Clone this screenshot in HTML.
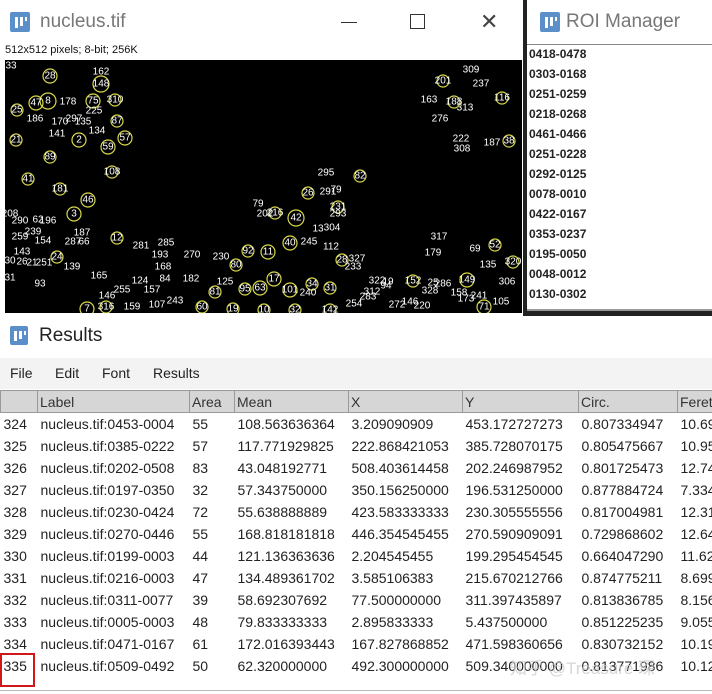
<!DOCTYPE html>
<html><head><meta charset="utf-8"><style>
*{margin:0;padding:0;box-sizing:border-box}
body{width:712px;height:694px;overflow:hidden;background:#fff;font-family:"Liberation Sans",sans-serif;position:relative}
.abs{position:absolute}
.logo{position:absolute;width:20px;height:20px;background:#5b8fc9;border-radius:2px}
.logo i{position:absolute;background:#fff}
.tt{font-size:19px;color:#777}
.roi div{height:20px;line-height:20px;font-size:12px;font-weight:bold;color:#222;padding-left:2px}
table{border-collapse:collapse;position:absolute;left:0;top:390px;font-size:14px;color:#222;table-layout:fixed;width:727px}
td{height:22px;padding-left:3px;white-space:nowrap;overflow:hidden}
tr.h td{background:#d6d6d6;border:1px solid #999;height:22px;color:#333;padding-left:2px}
</style></head><body>
<div class="abs" style="left:0;top:0;width:524px;height:316px;background:#fff"></div>
<div class="logo" style="left:10px;top:12px"><i style="left:5px;top:5px;width:3px;height:11px"></i><i style="left:10px;top:5px;width:3px;height:9px"></i><i style="left:15px;top:5px;width:2px;height:4px"></i></div>
<div class="abs tt" style="left:40px;top:11px">nucleus.tif</div>
<div class="abs" style="left:341px;top:22px;width:16px;height:1px;background:#333"></div>
<div class="abs" style="left:410px;top:14px;width:15px;height:15px;border:1px solid #333"></div>
<div class="abs" style="left:480px;top:12px;font-size:22px;color:#444;line-height:20px">✕</div>
<div class="abs" style="left:5px;top:44px;font-size:11px;color:#111">512x512 pixels; 8-bit; 256K</div>
<svg class="abs" style="left:5px;top:60px" width="517" height="253" viewBox="5 60 517 253">
<rect x="5" y="60" width="517" height="253" fill="#000"/>
<g fill="none" stroke="#d8d84a" stroke-width="1.2">
<circle cx="50" cy="76" r="7"/><circle cx="101" cy="84" r="8"/><circle cx="443" cy="81" r="6"/><circle cx="502" cy="98" r="6"/><circle cx="36" cy="103" r="7"/><circle cx="48" cy="101" r="8"/><circle cx="93" cy="101" r="7"/><circle cx="115" cy="100" r="6"/><circle cx="17" cy="110" r="6"/><circle cx="454" cy="102" r="6"/><circle cx="117" cy="121" r="6"/><circle cx="79" cy="140" r="7"/><circle cx="125" cy="138" r="7"/><circle cx="16" cy="140" r="6"/><circle cx="108" cy="147" r="7"/><circle cx="509" cy="141" r="6"/><circle cx="50" cy="157" r="6"/><circle cx="112" cy="172" r="6"/><circle cx="28" cy="179" r="6"/><circle cx="60" cy="189" r="6"/><circle cx="360" cy="176" r="6"/><circle cx="88" cy="200" r="7"/><circle cx="308" cy="193" r="6"/><circle cx="74" cy="214" r="7"/><circle cx="275" cy="213" r="6"/><circle cx="296" cy="218" r="8"/><circle cx="338" cy="207" r="6"/><circle cx="117" cy="238" r="6"/><circle cx="248" cy="251" r="6"/><circle cx="268" cy="252" r="7"/><circle cx="290" cy="243" r="7"/><circle cx="495" cy="245" r="6"/><circle cx="57" cy="257" r="6"/><circle cx="236" cy="265" r="6"/><circle cx="274" cy="279" r="7"/><circle cx="312" cy="284" r="6"/><circle cx="260" cy="288" r="7"/><circle cx="290" cy="290" r="7"/><circle cx="330" cy="288" r="6"/><circle cx="467" cy="280" r="7"/><circle cx="484" cy="307" r="7"/><circle cx="87" cy="309" r="7"/><circle cx="106" cy="307" r="6"/><circle cx="202" cy="307" r="6"/><circle cx="233" cy="309" r="6"/><circle cx="264" cy="310" r="6"/><circle cx="295" cy="310" r="6"/><circle cx="330" cy="310" r="6"/><circle cx="413" cy="281" r="6"/><circle cx="215" cy="292" r="6"/><circle cx="245" cy="289" r="6"/><circle cx="342" cy="260" r="6"/><circle cx="513" cy="262" r="6"/>
</g>
<g fill="#fff" font-size="10" font-family="Liberation Sans" text-anchor="middle" dominant-baseline="middle">
<text x="11" y="66">33</text><text x="50" y="76">28</text><text x="101" y="72">162</text><text x="101" y="84">148</text><text x="443" y="81">201</text><text x="471" y="70">309</text><text x="481" y="84">237</text><text x="502" y="98">116</text><text x="36" y="103">47</text><text x="48" y="101">8</text><text x="68" y="102">178</text><text x="93" y="101">75</text><text x="94" y="111">225</text><text x="115" y="100">310</text><text x="17" y="110">25</text><text x="429" y="100">163</text><text x="454" y="102">188</text><text x="465" y="108">313</text><text x="440" y="119">276</text><text x="35" y="119">186</text><text x="60" y="122">170</text><text x="74" y="119">297</text><text x="83" y="122">135</text><text x="117" y="121">87</text><text x="97" y="131">134</text><text x="57" y="134">141</text><text x="79" y="140">2</text><text x="125" y="138">57</text><text x="16" y="140">21</text><text x="108" y="147">59</text><text x="461" y="139">222</text><text x="462" y="149">308</text><text x="492" y="143">187</text><text x="509" y="141">38</text><text x="50" y="157">89</text><text x="112" y="172">108</text><text x="28" y="179">41</text><text x="60" y="189">181</text><text x="326" y="173">295</text><text x="360" y="176">82</text><text x="88" y="200">46</text><text x="308" y="193">26</text><text x="328" y="192">291</text><text x="336" y="190">79</text><text x="74" y="214">3</text><text x="258" y="204">79</text><text x="338" y="207">231</text><text x="10" y="214">208</text><text x="20" y="221">290</text><text x="38" y="220">62</text><text x="48" y="221">196</text><text x="265" y="214">202</text><text x="275" y="213">216</text><text x="296" y="218">42</text><text x="338" y="214">293</text><text x="33" y="232">239</text><text x="318" y="229">13</text><text x="332" y="228">304</text><text x="20" y="237">259</text><text x="43" y="241">154</text><text x="82" y="233">187</text><text x="73" y="242">287</text><text x="84" y="242">66</text><text x="117" y="238">12</text><text x="141" y="246">281</text><text x="166" y="243">285</text><text x="439" y="237">317</text><text x="248" y="251">92</text><text x="268" y="252">11</text><text x="290" y="243">40</text><text x="309" y="242">245</text><text x="331" y="247">112</text><text x="433" y="253">179</text><text x="475" y="249">69</text><text x="495" y="245">52</text><text x="22" y="252">143</text><text x="57" y="257">24</text><text x="160" y="255">193</text><text x="192" y="255">270</text><text x="221" y="257">230</text><text x="10" y="261">30</text><text x="22" y="262">26</text><text x="32" y="263">21</text><text x="44" y="263">251</text><text x="72" y="267">139</text><text x="163" y="267">168</text><text x="236" y="265">80</text><text x="342" y="260">28</text><text x="357" y="259">327</text><text x="353" y="267">233</text><text x="488" y="265">135</text><text x="513" y="262">320</text><text x="10" y="278">31</text><text x="99" y="276">165</text><text x="165" y="279">84</text><text x="191" y="279">182</text><text x="312" y="284">34</text><text x="377" y="281">322</text><text x="388" y="282">19</text><text x="413" y="281">152</text><text x="433" y="283">25</text><text x="443" y="284">286</text><text x="467" y="280">149</text><text x="507" y="282">306</text><text x="40" y="284">93</text><text x="140" y="281">124</text><text x="274" y="279">17</text><text x="225" y="282">125</text><text x="372" y="292">312</text><text x="386" y="286">94</text><text x="430" y="291">328</text><text x="122" y="290">255</text><text x="152" y="290">157</text><text x="215" y="292">81</text><text x="245" y="289">95</text><text x="260" y="288">63</text><text x="290" y="290">101</text><text x="308" y="293">240</text><text x="330" y="288">31</text><text x="459" y="293">158</text><text x="479" y="296">241</text><text x="107" y="296">146</text><text x="368" y="297">283</text><text x="466" y="299">173</text><text x="501" y="302">105</text><text x="87" y="309">7</text><text x="106" y="307">316</text><text x="132" y="307">159</text><text x="157" y="305">107</text><text x="175" y="301">243</text><text x="202" y="307">60</text><text x="354" y="304">254</text><text x="397" y="305">272</text><text x="410" y="302">146</text><text x="422" y="306">220</text><text x="484" y="307">71</text><text x="233" y="309">19</text><text x="264" y="310">10</text><text x="295" y="310">32</text><text x="330" y="310">142</text>
</g>
</svg>
<div class="abs" style="left:523px;top:0;width:4px;height:316px;background:#222"></div>
<div class="logo" style="left:540px;top:12px"><i style="left:5px;top:5px;width:3px;height:11px"></i><i style="left:10px;top:5px;width:3px;height:9px"></i><i style="left:15px;top:5px;width:2px;height:4px"></i></div>
<div class="abs tt" style="left:566px;top:11px">ROI Manager</div>
<div class="abs" style="left:527px;top:44px;width:185px;height:1px;background:#888"></div>
<div class="abs roi" style="left:527px;top:44px;width:185px">
<div>0418-0478</div><div>0303-0168</div><div>0251-0259</div><div>0218-0268</div><div>0461-0466</div><div>0251-0228</div><div>0292-0125</div><div>0078-0010</div><div>0422-0167</div><div>0353-0237</div><div>0195-0050</div><div>0048-0012</div><div>0130-0302</div>
</div>
<div class="abs" style="left:527px;top:309px;width:185px;height:2px;background:#999"></div>
<div class="abs" style="left:523px;top:311px;width:189px;height:5px;background:#222"></div>
<div class="abs" style="left:0;top:316px;width:712px;height:378px;background:#fff"></div>
<div class="logo" style="left:10px;top:326px;width:18px;height:19px"><i style="left:4px;top:5px;width:3px;height:10px"></i><i style="left:9px;top:5px;width:3px;height:8px"></i><i style="left:14px;top:5px;width:2px;height:4px"></i></div>
<div class="abs" style="left:39px;top:325px;font-size:19px;color:#222">Results</div>
<div class="abs" style="left:0;top:358px;width:712px;height:31px;background:#f3f3f3"></div>
<div class="abs" style="left:10px;top:365px;font-size:14px;color:#222">File</div>
<div class="abs" style="left:55px;top:365px;font-size:14px;color:#222">Edit</div>
<div class="abs" style="left:102px;top:365px;font-size:14px;color:#222">Font</div>
<div class="abs" style="left:153px;top:365px;font-size:14px;color:#222">Results</div>
<table>
<colgroup><col style="width:37px"><col style="width:152px"><col style="width:45px"><col style="width:114px"><col style="width:114px"><col style="width:116px"><col style="width:99px"><col style="width:50px"></colgroup>
<tr class="h"><td></td><td>Label</td><td>Area</td><td>Mean</td><td>X</td><td>Y</td><td>Circ.</td><td>Feret</td></tr>
<tr><td>324</td><td>nucleus.tif:0453-0004</td><td>55</td><td>108.563636364</td><td>3.209090909</td><td>453.172727273</td><td>0.807334947</td><td>10.69</td></tr>
<tr><td>325</td><td>nucleus.tif:0385-0222</td><td>57</td><td>117.771929825</td><td>222.868421053</td><td>385.728070175</td><td>0.805475667</td><td>10.95</td></tr>
<tr><td>326</td><td>nucleus.tif:0202-0508</td><td>83</td><td>43.048192771</td><td>508.403614458</td><td>202.246987952</td><td>0.801725473</td><td>12.74</td></tr>
<tr><td>327</td><td>nucleus.tif:0197-0350</td><td>32</td><td>57.343750000</td><td>350.156250000</td><td>196.531250000</td><td>0.877884724</td><td>7.334</td></tr>
<tr><td>328</td><td>nucleus.tif:0230-0424</td><td>72</td><td>55.638888889</td><td>423.583333333</td><td>230.305555556</td><td>0.817004981</td><td>12.31</td></tr>
<tr><td>329</td><td>nucleus.tif:0270-0446</td><td>55</td><td>168.818181818</td><td>446.354545455</td><td>270.590909091</td><td>0.729868602</td><td>12.64</td></tr>
<tr><td>330</td><td>nucleus.tif:0199-0003</td><td>44</td><td>121.136363636</td><td>2.204545455</td><td>199.295454545</td><td>0.664047290</td><td>11.62</td></tr>
<tr><td>331</td><td>nucleus.tif:0216-0003</td><td>47</td><td>134.489361702</td><td>3.585106383</td><td>215.670212766</td><td>0.874775211</td><td>8.699</td></tr>
<tr><td>332</td><td>nucleus.tif:0311-0077</td><td>39</td><td>58.692307692</td><td>77.500000000</td><td>311.397435897</td><td>0.813836785</td><td>8.156</td></tr>
<tr><td>333</td><td>nucleus.tif:0005-0003</td><td>48</td><td>79.833333333</td><td>2.895833333</td><td>5.437500000</td><td>0.851225235</td><td>9.055</td></tr>
<tr><td>334</td><td>nucleus.tif:0471-0167</td><td>61</td><td>172.016393443</td><td>167.827868852</td><td>471.598360656</td><td>0.830732152</td><td>10.19</td></tr>
<tr><td>335</td><td>nucleus.tif:0509-0492</td><td>50</td><td>62.320000000</td><td>492.300000000</td><td>509.340000000</td><td>0.813771986</td><td>10.12</td></tr>
</table>
<div class="abs" style="left:0;top:653px;width:35px;height:34px;border:2px solid #d01818"></div>
<div class="abs" style="left:510px;top:654px;font-size:17px;color:rgba(200,200,200,0.75);font-family:'Liberation Sans','Noto Sans CJK SC',sans-serif">知乎 @Treasure 琛</div>
<div class="abs" style="left:0;top:690px;width:712px;height:1px;background:#bbb"></div>
</body></html>
